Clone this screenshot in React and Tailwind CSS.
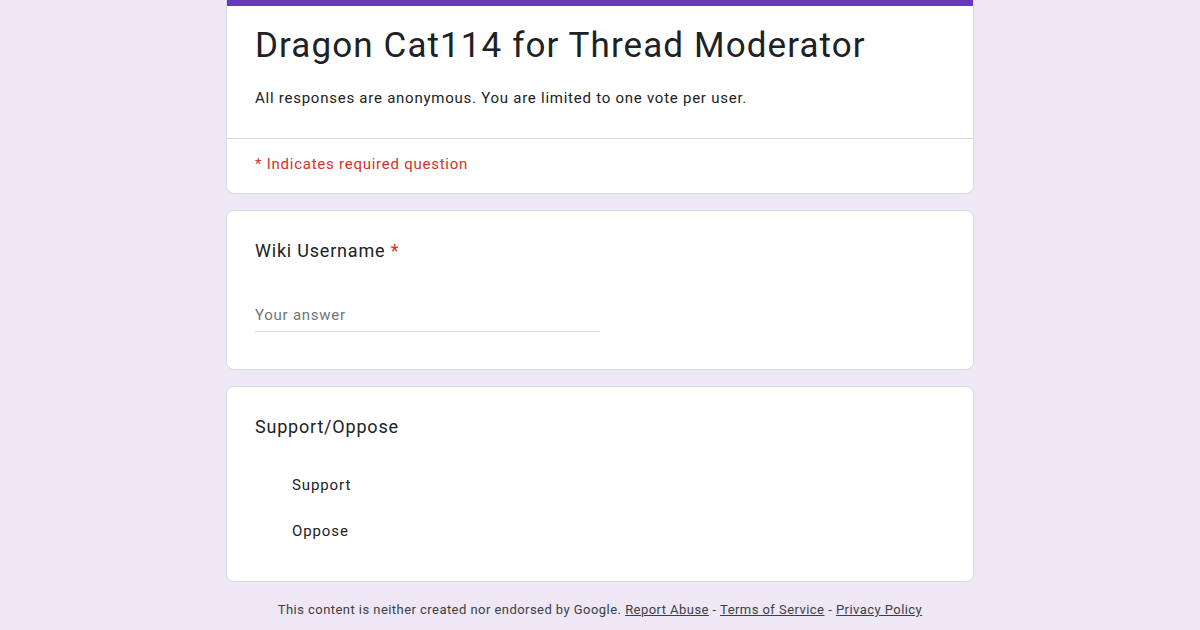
export default function App() {
  return (
    <div className="min-h-[630px] w-full bg-[#ede7f6] font-['Roboto',sans-serif] text-[#202124]">
      <div className="mx-auto flex w-[748px] flex-col">
        {/* header card */}
        <div className="overflow-hidden rounded-b-lg border border-t-0 border-[#dadce0] bg-white">
          <div className="h-1.5 bg-[#673ab7]" />
          <div className="border-b border-[#dadce0] px-7 pb-[30px] pt-5">
            <h1 className="text-[35px] leading-10 tracking-[1.1px] text-[#202124]">Dragon Cat114 for Thread Moderator</h1>
            <p className="mt-[22px] text-[15px] leading-5 tracking-[0.75px]">
              All responses are anonymous. You are limited to one vote per user.
            </p>
          </div>
          <div className="px-7 pb-[19px] pt-[15px] text-[15px] leading-5 tracking-[0.75px] text-[#d93025]">
            * Indicates required question
          </div>
        </div>

        {/* question 1 */}
        <div className="mt-4 rounded-lg border border-[#dadce0] bg-white px-7 pb-[37px] pt-7">
          <div className="text-lg leading-6 tracking-[0.8px]">
            Wiki Username <span className="text-[#d93025]">*</span>
          </div>
          <div className="mt-[42px] w-[345px] border-b border-[#e0e0e0] pb-[6px] text-[15px] leading-5 tracking-[0.75px] text-[#70757a]">
            Your answer
          </div>
        </div>

        {/* question 2 */}
        <div className="mt-4 rounded-lg border border-[#dadce0] bg-white px-7 pb-10 pt-7">
          <div className="text-lg leading-6 tracking-[0.8px]">Support/Oppose</div>
          <div className="mt-9 flex flex-col gap-[26px] pl-[37px] text-[15px] leading-5 tracking-[0.9px]">
            <div>Support</div>
            <div>Oppose</div>
          </div>
        </div>

        <div className="mt-5 text-center text-[13px] leading-4 tracking-[0.45px] text-[#3c4043]">
          This content is neither created nor endorsed by Google.{' '}
          <span className="underline">Report Abuse</span> - <span className="underline">Terms of Service</span> -{' '}
          <span className="underline">Privacy Policy</span>
        </div>
      </div>
    </div>
  );
}
